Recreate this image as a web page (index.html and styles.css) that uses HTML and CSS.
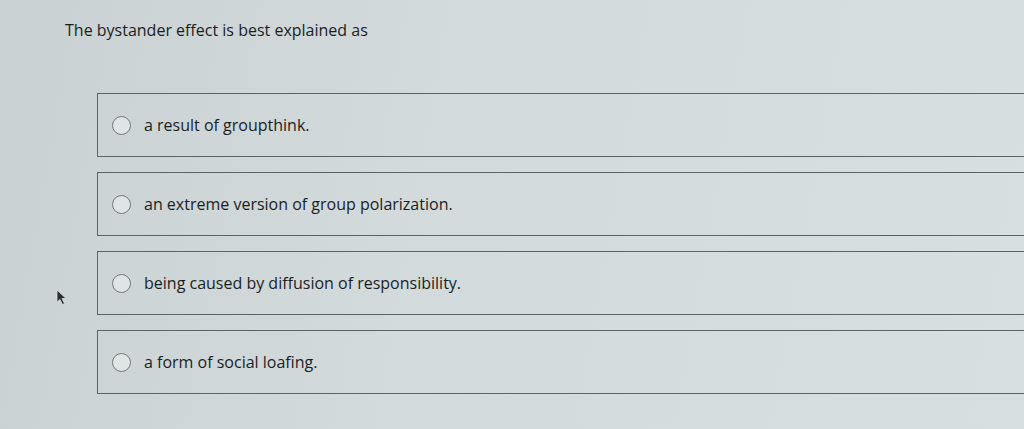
FILE: index.html
```html
<!DOCTYPE html>
<html>
<head>
<meta charset="utf-8">
<link rel="stylesheet" href="styles.css">
</head>
<body>
<div class="page">
  <p class="question">The bystander effect is best explained as</p>
  <div class="options">
    <label class="option"><span class="radio"></span><span class="text">a result of groupthink.</span></label>
    <label class="option"><span class="radio"></span><span class="text">an extreme version of group polarization.</span></label>
    <label class="option"><span class="radio"></span><span class="text">being caused by diffusion of responsibility.</span></label>
    <label class="option"><span class="radio"></span><span class="text">a form of social loafing.</span></label>
  </div>
  <svg class="cursor" width="12" height="17" viewBox="0 0 12 17"><path d="M1 1 L1 13 L4 10.5 L6.5 15.5 L8.5 14.5 L6 9.5 L10 9.5 Z" fill="#2a2f30" stroke="#d8dede" stroke-width="0.8"/></svg>
</div>
</body>
</html>
```
FILE: styles.css
```css
html, body {
  margin: 0;
  padding: 0;
}
body {
  width: 1024px;
  height: 429px;
  overflow: hidden;
  background: linear-gradient(100deg, #c9d1d2 0%, #d3dadb 40%, #d8dfe0 100%);
  font-family: "Open Sans", "Liberation Sans", sans-serif;
  color: #1a1e1f;
}
.page {
  position: relative;
  height: 429px;
  padding: 0 0 0 65px;
}
.question {
  margin: 0;
  padding-top: 19px;
  font-size: 16px;
  line-height: 22px;
}
.options {
  margin-top: 52px;
  margin-left: 32px;
  display: flex;
  flex-direction: column;
  gap: 15px;
}
.option {
  display: flex;
  align-items: center;
  height: 62px;
  border: 1.5px solid #5c6364;
  border-right: none;
  padding-left: 14px;
  gap: 13px;
}
.radio {
  width: 19px;
  height: 19px;
  border: 1.5px solid #707879;
  border-radius: 50%;
  box-sizing: border-box;
  background: #dfe5e5;
  margin-top: 1px;
}
.text {
  font-size: 16px;
  color: #1a1e1f;
}
.cursor {
  position: absolute;
  left: 56px;
  top: 289px;
}
```
